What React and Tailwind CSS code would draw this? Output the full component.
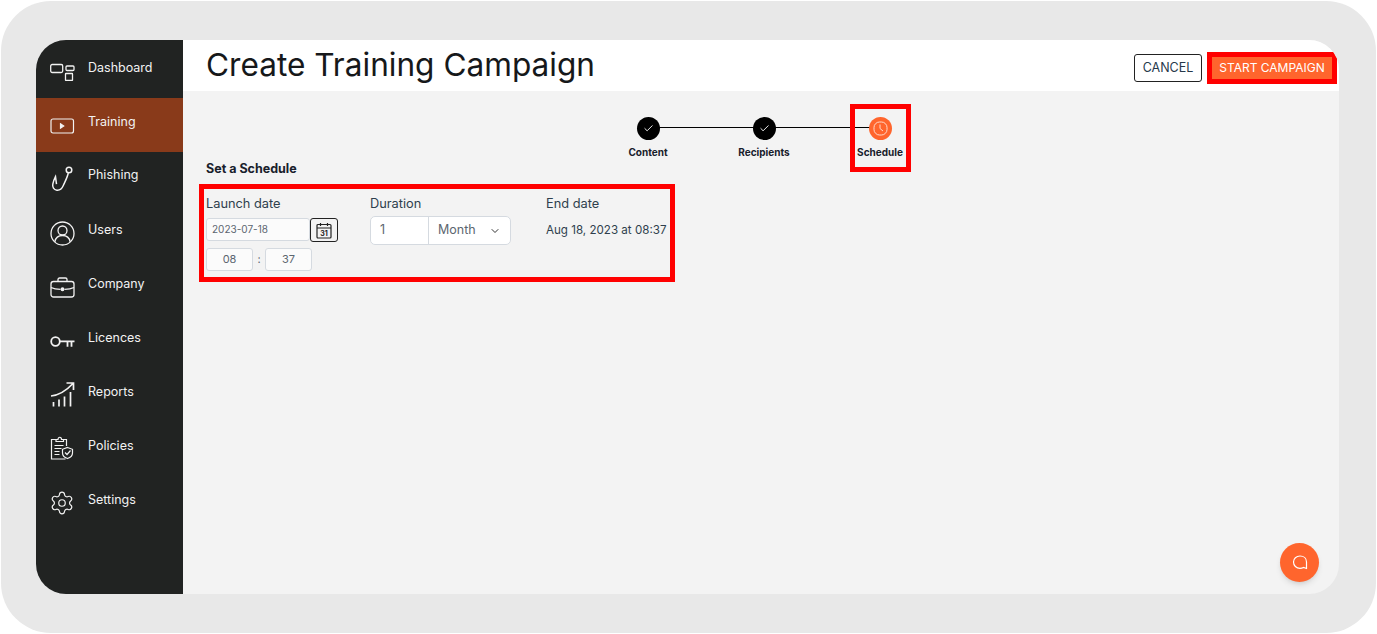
import React from "react";
import { Check, ChevronDown, Settings } from "lucide-react";

const font = "font-['Inter','Noto_Sans',sans-serif]";

function DashboardIcon() {
  return (
    <svg width="25" height="21" viewBox="0 0 25 21" fill="none" stroke="currentColor" strokeWidth="1.3">
      <rect x="0.700" y="4.500" width="12" height="8" rx="1.500" />
      <rect x="16" y="6" width="8" height="4.500" rx="1" />
      <rect x="15.500" y="13.500" width="7" height="7" rx="0.500" />
    </svg>
  );
}

function TrainingIcon() {
  return (
    <svg width="25" height="16" viewBox="0 0 25 16" fill="none" stroke="currentColor" strokeWidth="1.2">
      <rect x="1" y="1" width="22.500" height="14" rx="2" />
      <path d="M10.500 5.800l3.200 2.200-3.200 2.200z" fill="currentColor" />
    </svg>
  );
}

function HookIcon() {
  return (
    <svg width="24" height="27" viewBox="0 0 24 27" fill="none" stroke="currentColor" strokeWidth="1.500">
      <circle cx="19" cy="5" r="2.800" />
      <path d="M18.300 8c-.8 4-3.200 8.500-5 12.500-1.300 3-3.800 5-6.500 4.700-3-.4-4.600-3-4-6 .4-2.200 1.500-5.200 2.700-7.500l1 7.500" />
    </svg>
  );
}

function UsersIcon() {
  return (
    <svg width="25" height="25" viewBox="0 0 25 25" fill="none" stroke="currentColor" strokeWidth="1.3">
      <circle cx="12.500" cy="12.500" r="11.500" />
      <circle cx="12.500" cy="9.500" r="4.500" />
      <path d="M4.800 20.800c.8-4 3.800-6.300 7.700-6.300s6.900 2.300 7.700 6.300" />
    </svg>
  );
}

function CompanyIcon() {
  return (
    <svg width="25" height="21" viewBox="0 0 25 21" fill="none" stroke="currentColor" strokeWidth="1.3">
      <rect x="1" y="4.500" width="23" height="15.500" rx="2.500" />
      <path d="M8 4.500V2.500a1.500 1.500 0 0 1 1.500-1.500h6a1.500 1.500 0 0 1 1.500 1.500v2" />
      <path d="M1 10.500c3 1.500 7 1.800 9.500 1.800M24 10.500c-3 1.500-7 1.800-9.500 1.800" />
      <circle cx="12.500" cy="12.300" r="1.300" fill="currentColor" />
    </svg>
  );
}

function KeyIcon() {
  return (
    <svg width="25" height="12" viewBox="0 0 25 12" fill="none" stroke="currentColor" strokeWidth="1.800">
      <circle cx="5.500" cy="5.500" r="4.300" />
      <path d="M10 5.300h14.500M17.500 5.300v5.500M21.500 5.300v5.500" />
    </svg>
  );
}

function ReportsIcon() {
  return (
    <svg width="25" height="25" viewBox="0 0 25 25" fill="none" stroke="currentColor" strokeWidth="1.700">
      <path d="M1 14c8-.8 14-4 22-12.500M16.500 1h7v7" />
      <path d="M3.500 20v4.500M9 17.500v7M14.500 14.500v10M20.500 10v14.500" />
    </svg>
  );
}

function PoliciesIcon() {
  return (
    <svg width="24" height="24" viewBox="0 0 24 24" fill="none" stroke="currentColor" strokeWidth="1.200">
      <path d="M16.500 10V3.500h-3M6 3.500H1.500V23h14" />
      <path d="M6 5.500V3.500h2c0-3 3.500-3 3.500 0h2v2z" />
      <path d="M4.500 9.500h9M4.500 12.500h7M4.500 15.500h5M4.500 18.500h5" />
      <path d="M17.500 11.500l5 1.800v3.700c0 2.500-2 4.500-5 5.500-3-1-5-3-5-5.500v-3.700z" />
      <path d="M15 16.500l2 2 3.500-4" />
    </svg>
  );
}

function CalendarIcon() {
  return (
    <svg width="16" height="17" viewBox="0 0 16 17" fill="none" stroke="#222" strokeWidth="1.200">
      <rect x="1" y="2.500" width="14" height="13.500" rx="1" />
      <path d="M1 6h14M4.500 1v3M11.500 1v3" />
      <text x="8" y="14" textAnchor="middle" fontSize="7" fontWeight="700" fill="#222" stroke="none" fontFamily="Inter">31</text>
    </svg>
  );
}

const navItems = [
  { label: "Dashboard", icon: <DashboardIcon />, h: "h-[58px]", iconY: "mt-[20px]", textY: "pt-[20px]" },
  { label: "Training", icon: <TrainingIcon />, h: "h-[54px]", iconY: "mt-[20px]", textY: "pt-[16px]", active: true },
  { label: "Phishing", icon: <HookIcon />, h: "h-[54px]", iconY: "mt-[13px]", textY: "pt-[15px]" },
  { label: "Users", icon: <UsersIcon />, h: "h-[54px]", iconY: "mt-[15px]", textY: "pt-[16px]" },
  { label: "Company", icon: <CompanyIcon />, h: "h-[54px]", iconY: "mt-[17px]", textY: "pt-[16px]" },
  { label: "Licences", icon: <KeyIcon />, h: "h-[54px]", iconY: "mt-[22px]", textY: "pt-[16px]" },
  { label: "Reports", icon: <ReportsIcon />, h: "h-[54px]", iconY: "mt-[14px]", textY: "pt-[16px]" },
  { label: "Policies", icon: <PoliciesIcon />, h: "h-[54px]", iconY: "mt-[14px]", textY: "pt-[16px]" },
  { label: "Settings", icon: <Settings size={26} strokeWidth={1.100} className="-ml-[1px]" />, h: "h-[54px]", iconY: "mt-[14px]", textY: "pt-[16px]" },
];

function Step({ label, done, boxed, line }) {
  return (
    <div className="relative flex h-[68px] w-[116px] flex-col items-center">
      {line && <div className="absolute left-[58px] top-[23px] h-px w-[116px] bg-black" />}
      <div className={`relative mt-[13px] flex h-[23px] w-[23px] items-center justify-center rounded-full text-white ${done ? "bg-black" : "bg-[#ff652d]"}`}>
        {done ? (
          <Check size={11} strokeWidth={2} />
        ) : (
          <svg width="15" height="15" viewBox="0 0 15 15" fill="none" stroke="#ffd9c9" strokeWidth="1">
            <rect x="1" y="1" width="13" height="13" rx="5.500" />
            <path d="M7 3.500V7.500l3 2.500" />
          </svg>
        )}
      </div>
      <div className="mt-[5px] text-[10px] font-bold leading-[14px] text-[#18202b]">{label}</div>
      {boxed && <div className="absolute left-[28px] top-0 h-[68px] w-[61px] border-[5px] border-[#ff0000]" />}
    </div>
  );
}

export default function App() {
  return (
    <div className={`h-[634px] w-[1377px] overflow-hidden bg-white p-px ${font}`}>
      <div className="h-[632px] w-[1375px] rounded-[50px] bg-[#e8e8e8] pb-[39px] pl-[35px] pr-[37px] pt-[39px]">
        <div className="flex h-[554px] overflow-hidden rounded-[30px]">
          {/* Sidebar */}
          <div className="w-[147px] shrink-0 bg-[#212322] text-[#f2f2f2]">
            {navItems.map((item) => (
              <div key={item.label} className={`flex ${item.h} pl-[14px] ${item.active ? "bg-[#893a1a]" : ""}`}>
                <div className={`flex w-[38px] shrink-0 justify-start ${item.iconY}`}>{item.icon}</div>
                <div className={`text-[12.500px] leading-[16px] ${item.textY}`}>{item.label}</div>
              </div>
            ))}
          </div>

          {/* Main */}
          <div className="relative flex flex-1 flex-col bg-[#f3f3f3]">
            <div className="flex h-[51px] items-start justify-between bg-white pl-[23px] pr-[2px]">
              <h1 className="text-[31.600px] font-normal leading-[50px] text-[#16181a]">Create Training Campaign</h1>
              <div className="mt-[12px] flex items-center gap-[5px]">
                <button className="h-[28px] w-[68px] rounded-[3px] border border-[#222] text-[12.500px] text-[#26384a]">CANCEL</button>
                <button className="h-[32px] w-[130px] border-[5px] border-[#ff0000] bg-[#ff652d] text-[12px] text-white">START CAMPAIGN</button>
              </div>
            </div>

            <div className="flex justify-center pl-[6px] pt-[13px]">
              <Step label="Content" done line />
              <Step label="Recipients" done line />
              <Step label="Schedule" boxed />
            </div>

            <div className="-mt-[10px] pl-[23px] text-[12.500px] font-bold leading-[14px] text-[#18202b]">Set a Schedule</div>

            <div className="ml-[16px] mt-[8px] flex h-[98px] w-[476px] border-[5px] border-[#ff0000] pl-[2px] pt-[7px] text-[12.800px] text-[#2f3f4d]">
              <div className="w-[164px]">
                <div className="leading-[16px]">Launch date</div>
                <div className="mt-[6px] flex">
                  <div className="flex h-[23px] w-[104px] items-center rounded-[3px] border border-[#d5dae0] bg-[#fbfbfb] pl-[5px] text-[10px] text-[#5c6670]">2023-07-18</div>
                  <div className="flex h-[24px] w-[28px] items-center justify-center rounded-[3px] border border-[#222]"><CalendarIcon /></div>
                </div>
                <div className="mt-[6px] flex items-center text-[11px] text-[#5c6670]">
                  <div className="flex h-[23px] w-[47px] items-center justify-center rounded-[3px] border border-[#d5dae0] bg-[#fbfbfb]">08</div>
                  <div className="w-[12px] text-center">:</div>
                  <div className="flex h-[23px] w-[47px] items-center justify-center rounded-[3px] border border-[#d5dae0] bg-[#fbfbfb]">37</div>
                </div>
              </div>
              <div className="w-[176px]">
                <div className="leading-[16px]">Duration</div>
                <div className="mt-[4px] flex h-[29px] w-[141px] items-center rounded-[5px] border border-[#d5dae0] bg-white text-[12.500px] text-[#5c6670]">
                  <div className="flex h-full w-[58px] items-center border-r border-[#d5dae0] pl-[9px]">1</div>
                  <div className="pl-[9px]">Month</div>
                  <ChevronDown size={12} className="ml-auto mr-[9px] text-[#333]" />
                </div>
              </div>
              <div>
                <div className="leading-[16px]">End date</div>
                <div className="mt-[10px] whitespace-nowrap text-[11.600px] leading-[16px]">Aug 18, 2023 at 08:37</div>
              </div>
            </div>

            {/* Chat button */}
            <button className="absolute bottom-[12px] right-[20px] flex h-[39px] w-[39px] items-center justify-center rounded-full bg-[#ff652d] shadow-md">
              <svg width="16" height="15" viewBox="0 0 16 15" fill="none" stroke="white" strokeWidth="1.200">
                <path d="M8 1c3.800 0 6.500 2.500 6.500 6v6.500l-3-1c-1 .5-2.200.8-3.500.8C4.300 13.300 1.500 10.500 1.500 7S4.300 1 8 1z" />
              </svg>
            </button>
          </div>
        </div>
      </div>
    </div>
  );
}
